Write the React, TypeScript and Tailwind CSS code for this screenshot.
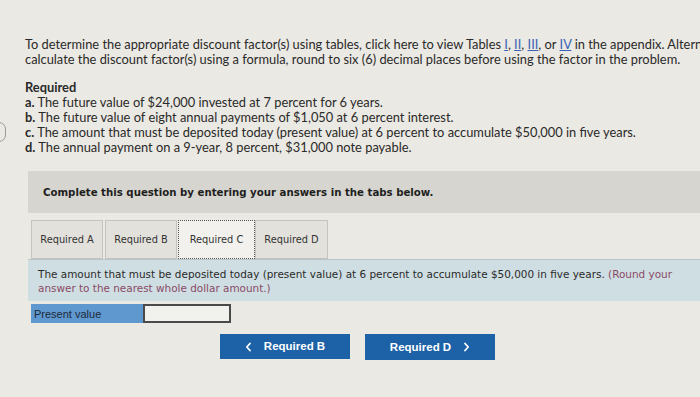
import React from "react";

const sans = { fontFamily: 'Lato, "Open Sans", "Liberation Sans", sans-serif' };
const verdana = { fontFamily: '"DejaVu Sans", Verdana, sans-serif' };
const arial = { fontFamily: '"Liberation Sans", Arial, sans-serif' };

function Chevron({ dir }: { dir: "left" | "right" }) {
  return (
    <svg width="7" height="10" viewBox="0 0 7 10" fill="none" stroke="white" strokeWidth="1.8" strokeLinecap="round" strokeLinejoin="round">
      {dir === "left" ? <path d="M5 1.5 L1.8 5 L5 8.5" /> : <path d="M2 1.5 L5.2 5 L2 8.5" />}
    </svg>
  );
}

export default function App() {
  return (
    <div className="relative w-[700px] h-[397px] overflow-hidden bg-[#ebe9e3] text-[#2a2a2a]">
      <div className="absolute left-[-8px] top-[122px] w-[14px] h-[20px] rounded-full border border-[#9a9a96]" />
      <div className="pt-[37px] pl-[25px] whitespace-nowrap text-[12.85px] leading-[14.6px]" style={sans}>
        <div>
          To determine the appropriate discount factor(s) using tables, click here to view Tables{" "}
          <span className="text-[#3a62b5] underline">I</span>,{" "}
          <span className="text-[#3a62b5] underline">II</span>,{" "}
          <span className="text-[#3a62b5] underline">III</span>, or{" "}
          <span className="text-[#3a62b5] underline">IV</span> in the appendix. Alternatively, if you
        </div>
        <div>calculate the discount factor(s) using a formula, round to six (6) decimal places before using the factor in the problem.</div>
        <div className="mt-[14px] font-bold">Required</div>
        <div className="leading-[14.9px]">
          <div><b>a.</b> The future value of $24,000 invested at 7 percent for 6 years.</div>
          <div><b>b.</b> The future value of eight annual payments of $1,050 at 6 percent interest.</div>
          <div><b>c.</b> The amount that must be deposited today (present value) at 6 percent to accumulate $50,000 in five years.</div>
          <div><b>d.</b> The annual payment on a 9-year, 8 percent, $31,000 note payable.</div>
        </div>
      </div>

      <div className="ml-[28px] mt-[17px] h-[42px] bg-[#d6d5cf] flex items-center pl-[15px]">
        <span className="font-bold text-[10.2px] text-[#1e1e1e]" style={verdana}>
          Complete this question by entering your answers in the tabs below.
        </span>
      </div>

      <div className="ml-[31px] mt-[7px] flex h-[39px] items-stretch text-[9.8px] text-[#333]" style={verdana}>
        <div className="w-[72px] flex items-center justify-center bg-[#e2e1dc] border border-[#c4c3bd]">Required A</div>
        <div className="ml-[2px] w-[72px] flex items-center justify-center bg-[#e2e1dc] border border-[#c4c3bd]">Required B</div>
        <div className="ml-[1px] w-[77px] flex items-center justify-center bg-[#f2f1ed] border border-dotted border-[#555]">Required C</div>
        <div className="w-[73px] flex items-center justify-center bg-[#e2e1dc] border border-[#c4c3bd]">Required D</div>
      </div>

      <div className="ml-[28px] h-[42px] bg-[#cfdee2] border-t border-[#b8c4c6] pl-[10px] pt-[7px] text-[10.45px] leading-[14px] whitespace-nowrap text-[#2a2a2a]" style={verdana}>
        <div>
          The amount that must be deposited today (present value) at 6 percent to accumulate $50,000 in five years.{" "}
          <span className="text-[#8a4a66]">(Round your</span>
        </div>
        <div className="text-[#8a4a66]">answer to the nearest whole dollar amount.)</div>
      </div>

      <div className="ml-[31px] mt-[3px] flex h-[19px]">
        <div className="w-[112px] bg-[#5f98cf] text-[11px] text-[#1d2a3a] pl-[3px] flex items-center" style={arial}>
          Present value
        </div>
        <div className="w-[88px] bg-[#f1f1ee] border-2 border-[#4a4a4a]" />
      </div>

      <div className="mt-[11px] ml-[220px] flex gap-[15px]" style={arial}>
        <div className="w-[130px] h-[25px] bg-[#1d62a6] text-white text-[11.5px] font-bold flex items-center justify-center gap-[12px]">
          <Chevron dir="left" />
          <span>Required B</span>
        </div>
        <div className="w-[130px] h-[26px] bg-[#1d62a6] text-white text-[11.5px] font-bold flex items-center justify-center gap-[12px]">
          <span>Required D</span>
          <Chevron dir="right" />
        </div>
      </div>
    </div>
  );
}
